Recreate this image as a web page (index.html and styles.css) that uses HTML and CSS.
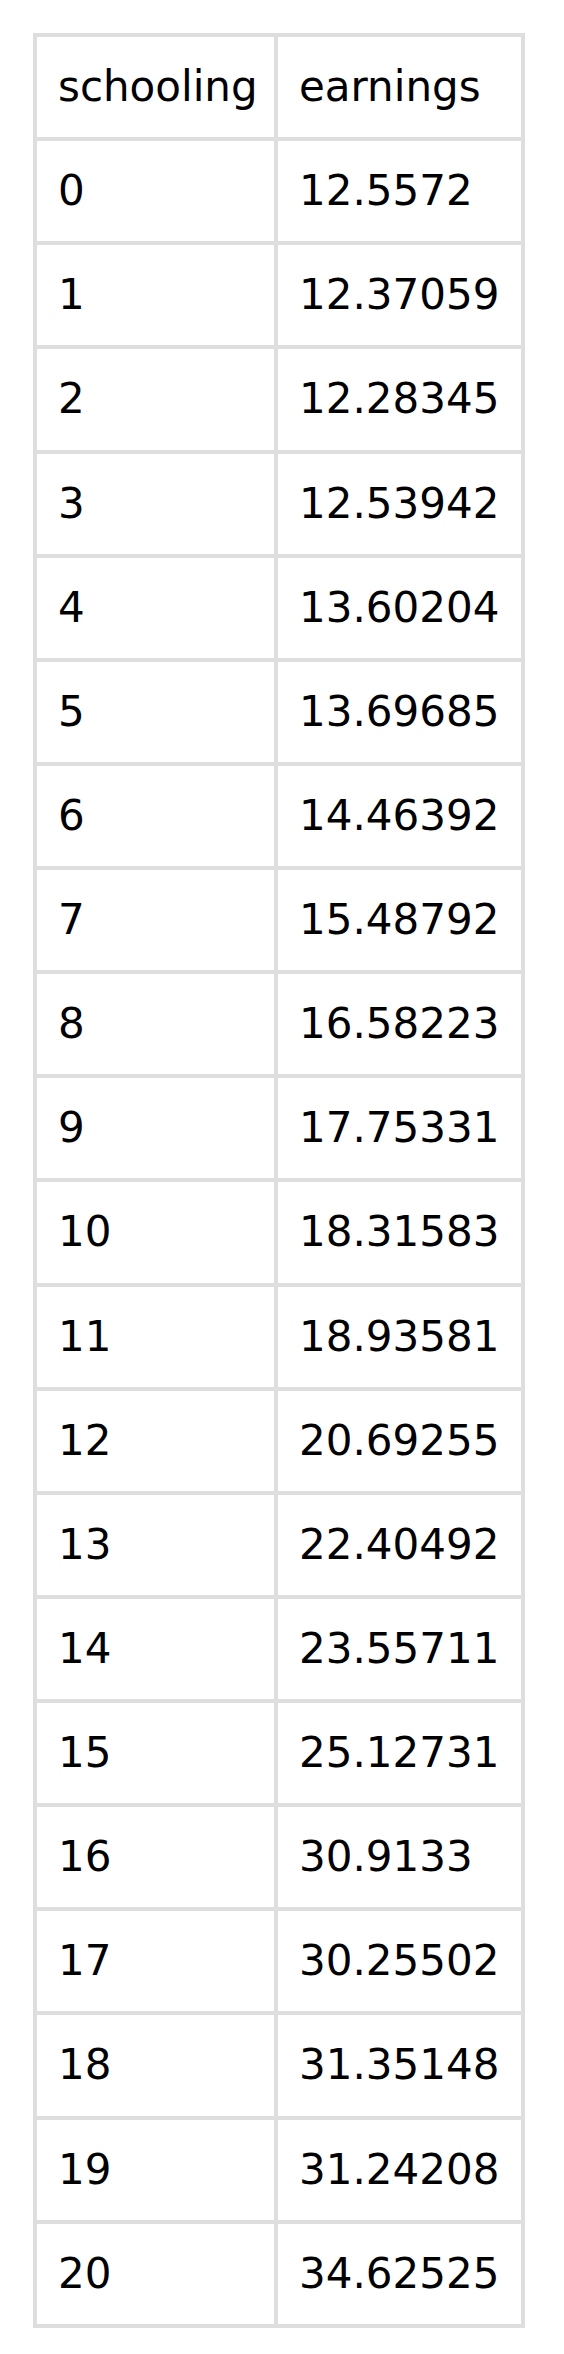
FILE: index.html
```html
<!DOCTYPE html>
<html>
<head>
<meta charset="utf-8">
<link rel="stylesheet" href="styles.css">
</head>
<body>
<table class="data">
<tr><td class="c1">schooling</td><td class="c2">earnings</td></tr>
<tr><td class="c1">0</td><td class="c2">12.5572</td></tr>
<tr><td class="c1">1</td><td class="c2">12.37059</td></tr>
<tr><td class="c1">2</td><td class="c2">12.28345</td></tr>
<tr><td class="c1">3</td><td class="c2">12.53942</td></tr>
<tr><td class="c1">4</td><td class="c2">13.60204</td></tr>
<tr><td class="c1">5</td><td class="c2">13.69685</td></tr>
<tr><td class="c1">6</td><td class="c2">14.46392</td></tr>
<tr><td class="c1">7</td><td class="c2">15.48792</td></tr>
<tr><td class="c1">8</td><td class="c2">16.58223</td></tr>
<tr><td class="c1">9</td><td class="c2">17.75331</td></tr>
<tr><td class="c1">10</td><td class="c2">18.31583</td></tr>
<tr><td class="c1">11</td><td class="c2">18.93581</td></tr>
<tr><td class="c1">12</td><td class="c2">20.69255</td></tr>
<tr><td class="c1">13</td><td class="c2">22.40492</td></tr>
<tr><td class="c1">14</td><td class="c2">23.55711</td></tr>
<tr><td class="c1">15</td><td class="c2">25.12731</td></tr>
<tr><td class="c1">16</td><td class="c2">30.9133</td></tr>
<tr><td class="c1">17</td><td class="c2">30.25502</td></tr>
<tr><td class="c1">18</td><td class="c2">31.35148</td></tr>
<tr><td class="c1">19</td><td class="c2">31.24208</td></tr>
<tr><td class="c1">20</td><td class="c2">34.62525</td></tr>
</table>
</body>
</html>
```
FILE: styles.css
```css
html, body {
  margin: 0;
  padding: 0;
  background: #ffffff;
}
body {
  padding: 33px;
  font-family: "DejaVu Sans", Verdana, sans-serif;
  color: #000000;
}
.data {
  border-collapse: separate;
  border-spacing: 0;
  table-layout: fixed;
  width: 492px;
  border-right: 4px solid #dedede;
  border-bottom: 4px solid #dedede;
}
.data td {
  box-sizing: border-box;
  height: 104.14px;
  padding: 0 0 0 21px;
  border-top: 4px solid #dedede;
  border-left: 4px solid #dedede;
  font-size: 42px;
  line-height: 48px;
  vertical-align: middle;
  white-space: nowrap;
}
.data .c1 {
  width: 241px;
}
.data .c2 {
  width: 247px;
}
```
